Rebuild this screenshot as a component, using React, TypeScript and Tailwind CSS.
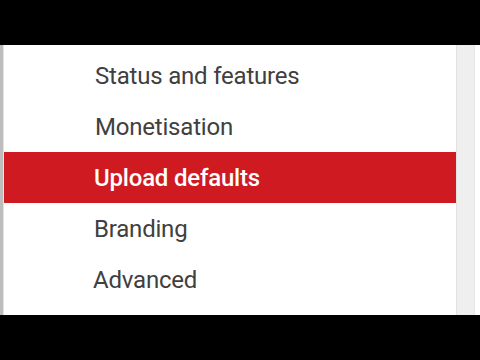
const items = [
  { label: 'Status and features', pad: 'pl-[91px]' },
  { label: 'Monetisation', pad: 'pl-[91px]' },
  { label: 'Upload defaults', pad: 'pl-[90px]' },
  { label: 'Branding', pad: 'pl-[90px]' },
  { label: 'Advanced', pad: 'pl-[89px]' },
]

export default function App() {
  return (
    <div className="flex h-[360px] w-[480px] flex-col bg-black" style={{ fontFamily: 'Roboto, "Noto Sans", sans-serif' }}>
      <div className="h-[45px]" />
      <div className="flex h-[270px] bg-white">
        <div className="w-[3px] bg-[#bdbdbd]" />
        <div className="w-[1px] bg-[#e6e6e6]" />
        <div className="flex w-[452px] flex-col pt-[5px]">
          {items.map((item, idx) => {
            const active = idx === 2
            return (
              <div
                key={item.label}
                className={
                  active
                    ? `flex h-[51px] items-center bg-[#cf1a21] ${item.pad} text-[24px] font-medium tracking-[-0.2px] text-white`
                    : `flex h-[51px] items-center ${item.pad} text-[24px] tracking-[-0.2px] text-[#404040]`
                }
              >
                {item.label}
              </div>
            )
          })}
        </div>
        <div className="w-[1px] bg-[#e2e2e2]" />
        <div className="w-[17px] bg-[#efefef]" />
        <div className="w-[1px] bg-[#e6e6e6]" />
        <div className="flex-1 bg-white" />
      </div>
      <div className="flex-1" />
    </div>
  )
}
